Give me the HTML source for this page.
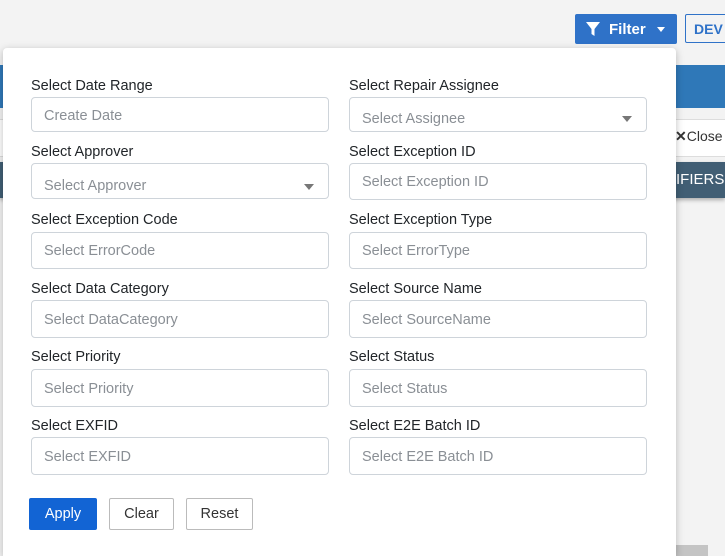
<!DOCTYPE html><html style="height:556px;overflow:hidden"><head><style>
body{margin:0;width:725px;height:556px;background:#f3f3f3;position:relative;overflow:hidden;font-family:"Liberation Sans",sans-serif}
.a{position:absolute}
.panel{left:3px;top:48px;width:673px;height:508px;background:#fff;border-radius:4px 4px 0 0;box-shadow:0 2px 8px rgba(0,0,0,.25)}
.lbl{position:absolute;font-size:14.5px;color:#212529}
.inp{position:absolute;width:298px;height:35px;border:1px solid #ced4da;border-radius:4px;box-sizing:border-box;color:#8a8f95;font-size:14.5px;padding:10px 12px;background:#fff}
.car{position:absolute;right:14px;top:18px;width:0;height:0;border-left:5px solid transparent;border-right:5px solid transparent;border-top:6px solid #777}
.btn{position:absolute;top:498px;height:32px;box-sizing:border-box;font-size:14.5px;text-align:center;line-height:30px;border-radius:2px}
</style></head><body>
<div class="a" style="left:575px;top:14px;width:102px;height:30px;background:#2f72c8;border-radius:2px;color:#fff;font-size:15px;font-weight:bold;line-height:31px">
<svg class="a" style="left:11px;top:8px" width="14" height="14" viewBox="0 0 14 14"><path d="M0 0H14L8.5 7V14L5.5 12V7Z" fill="#fff"/></svg>
<span class="a" style="left:34px">Filter</span><div class="a" style="left:82px;top:13px;border-left:4px solid transparent;border-right:4px solid transparent;border-top:5px solid #fff"></div></div>
<div class="a" style="left:685px;top:14px;width:50px;height:29px;border:1px solid #2f72c8;box-sizing:border-box;border-radius:2px;color:#2f72c8;font-size:14px;font-weight:bold;line-height:29px;padding-left:8px">DEV</div>
<div class="a" style="left:0;top:65px;width:725px;height:43px;background:#2f78b8"></div>
<div class="a" style="left:0;top:119px;width:725px;height:36px;background:#fff;border-top:1px solid #ddd;border-bottom:1px solid #ddd"></div>
<div class="a" style="left:675px;top:128px;font-size:14px;color:#333"><b>✕</b>Close</div>
<div class="a" style="left:0;top:162px;width:725px;height:36px;background:#415e74;box-shadow:0 2px 4px rgba(0,0,0,.3)"></div>
<div class="a" style="left:676px;top:171px;font-size:15px;color:#fff">IFIERS</div>
<div class="a" style="left:676px;top:545px;width:32px;height:11px;background:#c4c4c4"></div>
<div class="a panel"></div>
<div class="lbl" style="left:31px;top:78px">Select Date Range</div>
<div class="inp" style="left:31px;top:97px">Create Date</div>
<div class="lbl" style="left:349px;top:78px">Select Repair Assignee</div>
<div class="inp" style="left:349px;top:97px;padding-top:13px">Select Assignee<div class="car"></div></div>
<div class="lbl" style="left:31px;top:144px">Select Approver</div>
<div class="inp" style="left:31px;top:163px;height:36px;padding-top:14px">Select Approver<div class="car" style="top:20px"></div></div>
<div class="lbl" style="left:349px;top:144px">Select Exception ID</div>
<div class="inp" style="left:349px;top:163px;height:37px">Select Exception ID</div>
<div class="lbl" style="left:31px;top:212px">Select Exception Code</div>
<div class="inp" style="left:31px;top:232px;height:37px">Select ErrorCode</div>
<div class="lbl" style="left:349px;top:212px">Select Exception Type</div>
<div class="inp" style="left:349px;top:232px;height:37px">Select ErrorType</div>
<div class="lbl" style="left:31px;top:281px">Select Data Category</div>
<div class="inp" style="left:31px;top:300px;height:38px;padding-top:11px">Select DataCategory</div>
<div class="lbl" style="left:349px;top:281px">Select Source Name</div>
<div class="inp" style="left:349px;top:300px;height:38px;padding-top:11px">Select SourceName</div>
<div class="lbl" style="left:31px;top:349px">Select Priority</div>
<div class="inp" style="left:31px;top:369px;height:38px;padding-top:11px">Select Priority</div>
<div class="lbl" style="left:349px;top:349px">Select Status</div>
<div class="inp" style="left:349px;top:369px;height:38px;padding-top:11px">Select Status</div>
<div class="lbl" style="left:31px;top:418px">Select EXFID</div>
<div class="inp" style="left:31px;top:437px;height:38px;padding-top:11px">Select EXFID</div>
<div class="lbl" style="left:349px;top:418px">Select E2E Batch ID</div>
<div class="inp" style="left:349px;top:437px;height:38px;padding-top:11px">Select E2E Batch ID</div>
<div class="btn" style="left:29px;width:68px;background:#1264d4;color:#fff;line-height:33px">Apply</div>
<div class="btn" style="left:109px;width:65px;border:1px solid #bbb;color:#333;line-height:31px">Clear</div>
<div class="btn" style="left:186px;width:67px;border:1px solid #bbb;color:#333;line-height:31px">Reset</div>
</body></html>
